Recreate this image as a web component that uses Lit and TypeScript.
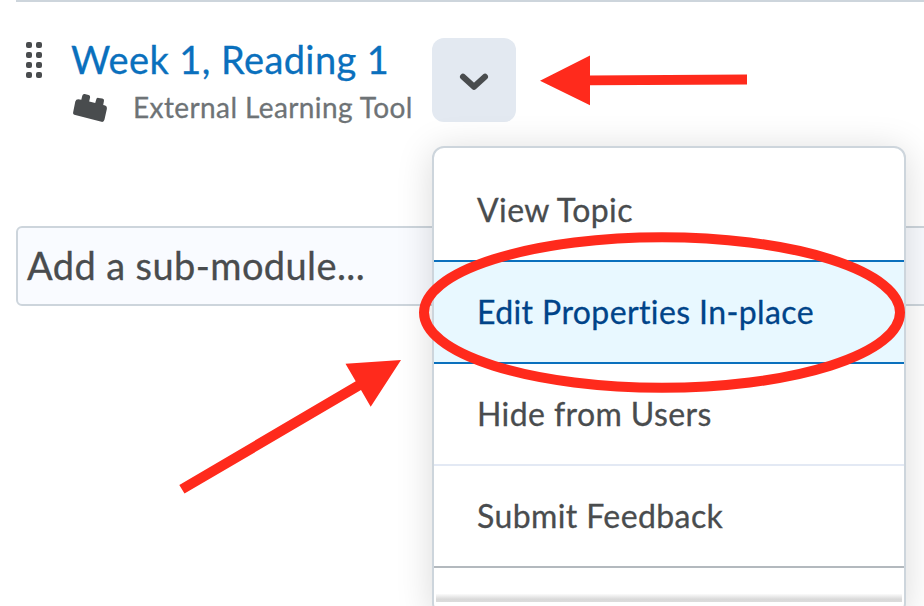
import { LitElement, html, css } from "lit";
import { customElement, property } from "lit/decorators.js";
import { classMap } from "lit/directives/class-map.js";

@customElement("topic-menu")
class TopicMenu extends LitElement {
  @property({ type: Number }) active = 1;

  static styles = css`
    :host { display: block; }
    .menu {
      box-sizing: border-box;
      width: 474px;
      height: 469px;
      border: 2px solid #cdd5dc;
      border-radius: 12px;
      background: #fff;
      box-shadow: 0 4px 36px rgba(0, 0, 0, 0.15);
      padding-top: 10px;
      display: flex;
      flex-direction: column;
      overflow: hidden;
    }
    .item {
      box-sizing: border-box;
      height: 104px;
      flex: none;
      margin-bottom: -2px;
      padding-left: 43px;
      border-top: 2px solid transparent;
      border-bottom: 2px solid #e3e9f4;
      display: flex;
      align-items: center;
      font-size: 32px;
      line-height: 40px;
      letter-spacing: 0.4px;
      -webkit-text-stroke: 0.3px currentColor;
      color: #494c4e;
      white-space: nowrap;
    }
    .item.active {
      position: relative;
      background: #e8f8ff;
      border-color: #0a70bd;
      color: #004489;
    }
    .item.last { border-bottom-color: #b3b9be; }
    .fade {
      flex: none;
      height: 8px;
      margin: 28px 2px 0;
      background: linear-gradient(#fbfbfb, #d9d9d9 65%, #dcdcdc);
    }
  `;

  private items = ["View Topic", "Edit Properties In-place", "Hide from Users", "Submit Feedback"];

  render() {
    return html`<div class="menu">
      ${this.items.map(
        (label, i) => html`<div
          class=${classMap({ item: true, active: i === this.active, last: i === this.items.length - 1 })}
        ><span>${label}</span></div>`
      )}
      <div class="fade"></div>
    </div>`;
  }
}

@customElement("app-root")
class AppRoot extends LitElement {
  static styles = css`
    :host {
      display: block;
      position: relative;
      width: 924px;
      height: 606px;
      overflow: hidden;
      background: #fff;
      font-family: Lato, "Liberation Sans", sans-serif;
      color: #494c4e;
      -webkit-text-stroke: 0.3px currentColor;
    }
    .page { padding-left: 16px; }
    .topic {
      box-sizing: border-box;
      height: 226px;
      border-top: 2px solid #cdd5dc;
      display: flex;
      align-items: flex-start;
    }
    .grip {
      flex: none;
      display: grid;
      grid-template-columns: 6px 6px;
      grid-auto-rows: 6px;
      gap: 4px;
      margin: 40px 29px 0 10px;
    }
    .dot { background: #494c4e; border-radius: 2px; }
    .info { width: 361px; flex: none; padding-top: 33px; }
    .title {
      font-size: 38px;
      line-height: 48px;
      letter-spacing: 0.4px;
      color: #0a70bd;
      -webkit-text-stroke: 0.3px currentColor;
      white-space: nowrap;
    }
    .meta {
      display: flex;
      align-items: center;
      gap: 25px;
      font-size: 28px;
      line-height: 40px;
      letter-spacing: 0.4px;
      color: #6e7376;
      -webkit-text-stroke: 0.3px currentColor;
      white-space: nowrap;
      margin-top: 4px;
    }
    .meta svg { flex: none; margin-top: 2px; }
    .toggle {
      flex: none;
      margin-top: 36px;
      width: 84px;
      height: 84px;
      padding: 0;
      border: 0;
      border-radius: 12px;
      background: #e3e9f1;
      display: block;
    }
    .toggle svg { display: block; }
    .add {
      box-sizing: border-box;
      height: 80px;
      margin-right: -20px;
      border: 2px solid #cdd5dc;
      border-radius: 6px;
      background: #f9fbff;
      padding: 0 0 2px 9px;
      display: flex;
      align-items: center;
      font-size: 38px;
      letter-spacing: 0.4px;
    }
    .popup { position: absolute; left: 432px; top: 146px; }
    .marks { position: absolute; left: 0; top: 0; pointer-events: none; }
  `;

  render() {
    return html`
      <div class="page">
        <div class="topic">
          <div class="grip">${Array.from({ length: 8 }, () => html`<i class="dot"></i>`)}</div>
          <div class="info">
            <div class="title">Week 1, Reading 1</div>
            <div class="meta">
              <svg width="37" height="30" viewBox="71 93 37 30" fill="#494c4e">
                <path d="M75.3 101.4Q76 99.2 78.2 99.2L81.3 99.7L82.3 95.7Q82.8 93.8 84.7 94.1L88.6 95Q90.4 95.5 90.1 97.3L89.2 101.5L95.2 103L96.3 99.3Q96.8 97.6 98.5 97.9L102.3 98.5Q104.3 98.9 104 100.8L103.2 104.9L105.2 105.6Q107.4 106.5 106.9 108.8L104.5 119.5Q103.9 122.3 101.5 121.8L74.3 114.8Q72.8 114.4 73.1 112.6Z"></path>
              </svg>
              <span>External Learning Tool</span>
            </div>
          </div>
          <button class="toggle" aria-label="Topic actions">
            <svg width="84" height="84" viewBox="432 38 84 84" fill="none" stroke="#494c4e" stroke-width="6" stroke-linecap="round" stroke-linejoin="round">
              <path d="M463 76.8L474 86.8L485 76.8"></path>
            </svg>
          </button>
        </div>
        <div class="add">Add a sub-module...</div>
      </div>
      <topic-menu class="popup"></topic-menu>
      <svg class="marks" width="924" height="606" viewBox="0 0 924 606" fill="#ff2a1c">
        <path d="M540 80.7L590 55.4V75.4L747 74.6V84.6L590 85.3V105.3Z"></path>
        <path d="M401 360L370.7 406.7L361 390L184.5 493.6L179.3 485L355.7 381.3L345.5 363.8Z"></path>
        <ellipse cx="662" cy="312.5" rx="238" ry="75.3" fill="none" stroke="#ff2a1c" stroke-width="10"></ellipse>
      </svg>
    `;
  }
}
